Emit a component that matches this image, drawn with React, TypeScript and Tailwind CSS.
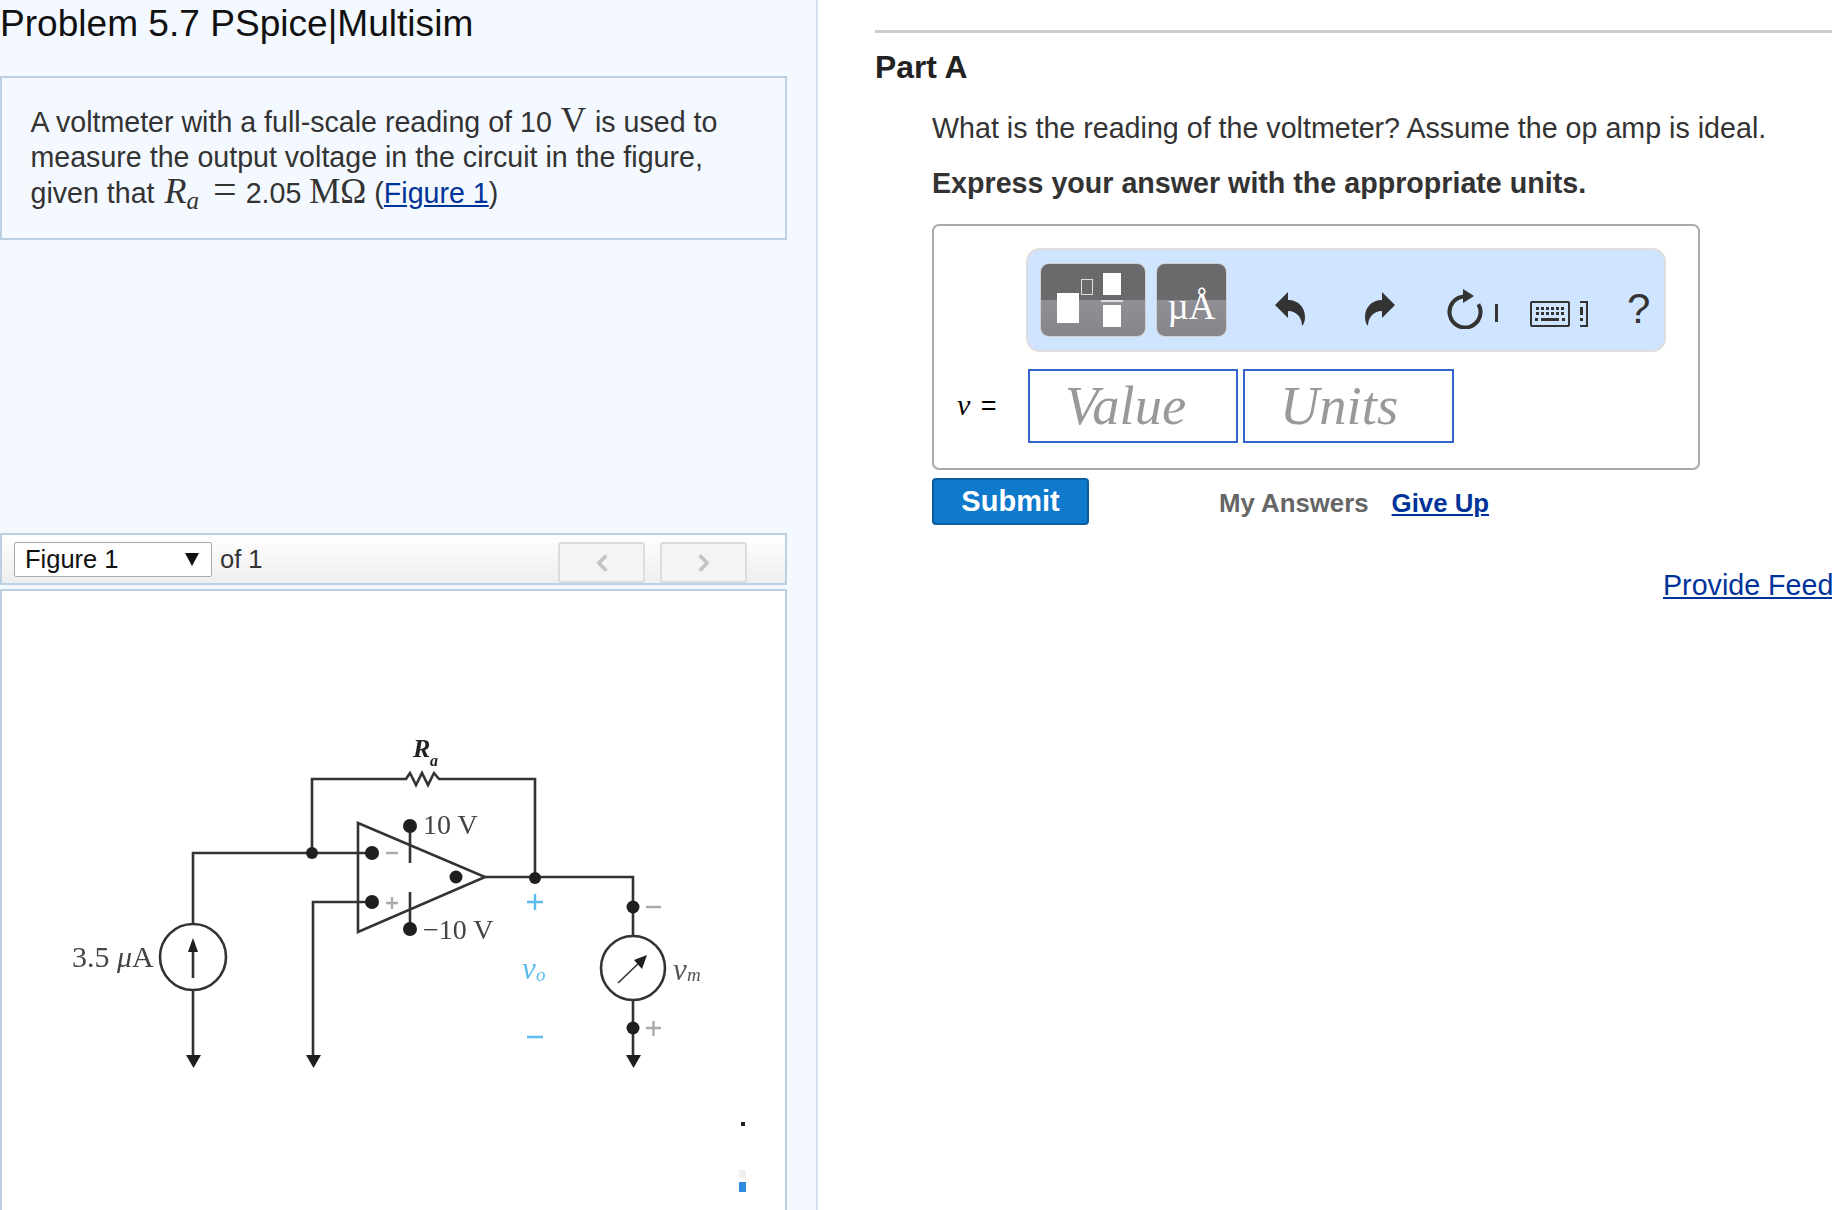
import { ChevronLeft, ChevronRight } from 'lucide-react';

const serif = "font-['Liberation_Serif',serif]";

function UndoIcon({ flip }: { flip?: boolean }) {
    return (
        <svg width="30" height="34" viewBox="0 0 30 34" className={flip ? '-scale-x-100' : ''}>
            <path d="M0 13 L13 0 V8 C24 8 30 16 30 25 C30 29 29 32 27 34 C27 26 22 19 13 19 V26 Z" fill="#333" />
        </svg>
    );
}

function ResetIcon() {
    return (
        <svg width="38" height="40" viewBox="0 0 38 40">
            <path d="M18 7.500 A15.500 15.500 0 1 0 31.400 15.200" fill="none" stroke="#333" strokeWidth="4" />
            <path d="M16 0 L27 7 L16 14 Z" fill="#333" />
        </svg>
    );
}

function KeyboardIcon() {
    const dots = [0, 1, 2, 3, 4, 5];
    return (
        <svg width="58" height="26" viewBox="0 0 58 26">
            <rect x="1" y="1" width="38" height="24" rx="1" fill="none" stroke="#333" strokeWidth="2" />
            {dots.map((d) => <rect key={d} x={6 + d * 5} y="6" width="3" height="3" fill="#333" />)}
            {dots.map((d) => <rect key={d} x={6 + d * 5} y="11" width="3" height="3" fill="#333" />)}
            <rect x="11" y="17" width="18" height="3" fill="#333" />
            <rect x="5" y="17" width="3" height="3" fill="#333" />
            <rect x="32" y="17" width="3" height="3" fill="#333" />
            <path d="M50 1 H57 V25 H50" fill="none" stroke="#333" strokeWidth="2" />
            <rect x="50" y="6" width="3" height="8" fill="#333" />
            <rect x="50" y="17" width="3" height="3" fill="#333" />
        </svg>
    );
}

function Circuit() {
    return (
        <svg width="782" height="617" viewBox="2 591 782 617" className="block blur-[0.7px]">
            <g fill="none" stroke="#333" strokeWidth="2.6">
                <path d="M193 924 V853 H372" />
                <path d="M312 853 V779 H402 l4 -0 l4 -6 l6 12 l6 -12 l6 12 l6 -12 l5 6 l4 0 H535 V878" />
                <path d="M358 823 V932 L485 877 Z" />
                <path d="M485 877 H633 V936" />
                <path d="M633 1000 V1058" />
                <path d="M372 902 H313 V1058" />
                <path d="M193 990 V1058" />
                <path d="M410 826 V863 M410 892 V929" />
                <circle cx="193" cy="957" r="33" />
                <circle cx="633" cy="968" r="32" />
                <path d="M193 978 V942" />
                <path d="M618 983 L642 960" strokeWidth="1.6" />
            </g>
            <g fill="#1f1f1f">
                <circle cx="312" cy="853" r="6" />
                <circle cx="372" cy="853" r="7" />
                <circle cx="372" cy="902" r="7" />
                <circle cx="410" cy="826" r="7" />
                <circle cx="410" cy="929" r="7" />
                <circle cx="456" cy="877" r="6.5" />
                <circle cx="535" cy="878" r="6" />
                <circle cx="633" cy="907" r="6.5" />
                <circle cx="633" cy="1028" r="6.5" />
                <path d="M186 1055 H201 L193.5 1068 Z" />
                <path d="M306 1055 H321 L313.5 1068 Z" />
                <path d="M626 1055 H641 L633.5 1068 Z" />
                <path d="M193 938 L198 952 H188 Z" />
                <path d="M647 955 L642 969 L634 960 Z" />
                <rect x="741" y="1122" width="4" height="4" />
            </g>
            <rect x="739" y="1182" width="7" height="10" fill="#2f8ae0" />
            <rect x="739" y="1170" width="7" height="8" fill="#f0f0ec" />
            <g stroke="#aaa" strokeWidth="2.4">
                <path d="M386 853 H398 M386 903 H398 M392 897 V909" />
                <path d="M646 907 H661 M646 1028 H661 M653.500 1021 V1036" />
            </g>
            <g stroke="#5cbcf0" strokeWidth="2.4">
                <path d="M527 902 H543 M535 894 V910 M527 1037 H543" />
            </g>
            <g className={serif} fill="#444" fontSize="28">
                <text x="423" y="834">10 V</text>
                <text x="423" y="939">−10 V</text>
                <text x="72" y="967" fontSize="30">3.5 <tspan fontStyle="italic">μ</tspan>A</text>
                <text x="413" y="757" fontStyle="italic" fontWeight="700" fill="#222" fontSize="26">R</text>
                <text x="430" y="766" fontStyle="italic" fontWeight="700" fill="#222" fontSize="16">a</text>
                <text x="673" y="980" fontStyle="italic" fill="#555" fontSize="31">v</text>
                <text x="687" y="981" fontStyle="italic" fill="#555" fontSize="19">m</text>
                <text x="522" y="979" fontStyle="italic" fill="#5cbcf0" fontSize="31">v</text>
                <text x="536" y="981" fontStyle="italic" fill="#5cbcf0" fontSize="19">o</text>
            </g>
        </svg>
    );
}

function NavButton({ children }: { children: React.ReactNode }) {
    return (
        <div className="w-[87px] h-[41px] flex items-center justify-center rounded-[3px] border-2 border-[#dcdcdc] bg-[#f4f4f4] text-[#c4c4c4]">
            {children}
        </div>
    );
}

export default function App() {
    return (
        <div className="flex w-[1832px] h-[1210px] overflow-hidden bg-white font-['Liberation_Sans',sans-serif]">
            {/* Left column: problem text and figure */}
            <div className="w-[818px] shrink-0 pr-[29px] bg-[#f4f9ff] border-r-2 border-[#d3e0ec]">
                <h1 className="h-[76px] text-[37.100px] leading-[47px] text-[#111]">Problem 5.7 PSpice|Multisim</h1>
                <div className="h-[164px] pl-[28.500px] pr-4 pt-[27px] border-2 border-[#bdd0e2] text-[28.600px] leading-[35px] text-[#333]">
                    <p>
                        A voltmeter with a full-scale reading of 10 <span className={`${serif} mx-[1px] text-[35px] leading-[0]`}>V</span> is used to<br />
                        measure the output voltage in the circuit in the figure,
                        <span className="block mt-[1px]">
                            given that <span className={`${serif} ml-[2px] italic text-[36px] leading-[0]`}>R<sub className="text-[25px] leading-[0]">a</sub></span>
                            <span className={`${serif} ml-[14px] mr-[9px] text-[42px] leading-[0]`}>=</span>2.05 <span className={`${serif} text-[35px] leading-[0]`}>MΩ</span> (<a className="underline text-[#003399]">Figure 1</a>)
                        </span>
                    </p>
                </div>
                <div className="mt-[293px] h-[52px] px-[12px] flex items-center border-2 border-[#bdd0e2] bg-gradient-to-b from-white to-[#eeeeee] text-[25.500px] text-[#333]">
                    <div className="w-[198px] h-[35px] pl-[10px] pr-[12px] flex items-center justify-between bg-white border border-[#aaa] rounded-[2px] text-[#111]">
                        <span>Figure 1</span>
                        <svg width="14" height="14" viewBox="0 0 14 14"><path d="M0 1 H14 L7 14 Z" fill="#111" /></svg>
                    </div>
                    <span className="ml-[8px]">of 1</span>
                    <div className="ml-auto mr-[26px] mt-[7px] flex gap-[15px]">
                        <NavButton><ChevronLeft size={26} strokeWidth={3.5} /></NavButton>
                        <NavButton><ChevronRight size={26} strokeWidth={3.5} /></NavButton>
                    </div>
                </div>
                <div className="mt-[4px] h-[640px] border-2 border-[#bdd0e2] bg-white">
                    <Circuit />
                </div>
            </div>

            {/* Right column: question and answer */}
            <div className="flex-1 min-w-0 pl-[57px]">
                <div className="mt-[30px] h-[3px] bg-[#cccccc]" />
                <h2 className="mt-[15px] text-[31.800px] leading-[38px] font-bold text-[#222]">Part A</h2>
                <div className="pl-[57px]">
                    <p className="mt-[24px] text-[28.650px] leading-[36px] text-[#333] whitespace-nowrap">What is the reading of the voltmeter? Assume the op amp is ideal.</p>
                    <p className="mt-[19px] text-[28.650px] leading-[36px] font-bold text-[#333] whitespace-nowrap">Express your answer with the appropriate units.</p>

                    <div className="mt-[23px] w-[768px] h-[246px] pl-[92px] pt-[22px] border-2 border-[#aaaaaa] rounded-[7px]">
                        <div className="w-[640px] h-[104px] pl-[12px] flex items-center border-2 border-[#dddddd] rounded-[14px] bg-[#cfe5ff]">
                            <div className="relative w-[106px] h-[74px] rounded-[9px] border border-[#cfcfcf] bg-[linear-gradient(#6a6a6c,#6a6a6c_50%,#8f8f95_50%,#858589)]">
                                <span className="absolute left-[16px] top-[29px] w-[22px] h-[30px] bg-white" />
                                <span className="absolute left-[40px] top-[15px] w-[12px] h-[16px] border border-[#ddd]" />
                                <span className="absolute left-[62px] top-[9px] w-[18px] h-[22px] bg-white" />
                                <span className="absolute left-[60px] top-[36px] w-[22px] h-[2px] bg-[#ddd]" />
                                <span className="absolute left-[62px] top-[41px] w-[18px] h-[22px] bg-white" />
                            </div>
                            <div className={`${serif} ml-[10px] w-[71px] h-[74px] pt-[14px] flex items-center justify-center rounded-[9px] border border-[#cfcfcf] bg-[linear-gradient(#6a6a6c,#6a6a6c_50%,#8f8f95_50%,#858589)] text-white text-[37px]`}>
                                µÅ
                            </div>
                            <div className="ml-[48px] mt-[17px]"><UndoIcon /></div>
                            <div className="ml-[60px] mt-[17px]"><UndoIcon flip /></div>
                            <div className="ml-[52px] mt-[18px]"><ResetIcon /></div>
                            <span className="ml-[10px] mt-[26px] w-[3px] h-[18px] bg-[#333]" />
                            <div className="ml-[32px] mt-[28px]"><KeyboardIcon /></div>
                            <span className="ml-[39px] mt-[18px] text-[42px] leading-none text-[#333]">?</span>
                        </div>
                        <div className="-ml-[69px] mt-[17px] flex items-center">
                            <span className="w-[71px] -mt-[3px] text-[27px]"><i className={`${serif} text-[30px]`}>v</i> <span className="ml-[3px]">=</span></span>
                            <div className={`${serif} w-[210px] h-[74px] pl-[35px] flex items-center border-2 border-[#3366cc] text-[54.500px] italic text-[#999]`}>Value</div>
                            <div className={`${serif} ml-[5px] w-[211px] h-[74px] pl-[35px] flex items-center border-2 border-[#3366cc] text-[54.500px] italic text-[#999]`}>Units</div>
                        </div>
                    </div>

                    <div className="mt-[8px] flex items-center">
                        <button className="w-[157px] h-[47px] rounded-[4px] border-2 border-[#0a5e9e] bg-[#0f79cc] text-white font-bold text-[29px]">Submit</button>
                        <span className="ml-[130px] mt-[3px] text-[25.800px] font-bold text-[#666]">My Answers</span>
                        <a className="ml-[23px] mt-[3px] text-[25.800px] font-bold underline text-[#003399]">Give Up</a>
                    </div>

                    <a className="block mt-[42px] ml-[731px] text-[28.650px] leading-[36px] underline text-[#003399] whitespace-nowrap">Provide Feedback</a>
                </div>
            </div>
        </div>
    );
}
